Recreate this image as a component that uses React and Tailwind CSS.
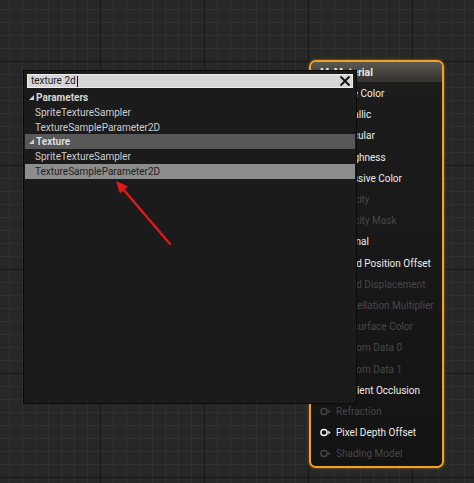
import React from "react";

const rows = [
  ["Base Color", true],
  ["Metallic", true],
  ["Specular", true],
  ["Roughness", true],
  ["Emissive Color", true],
  ["Opacity", false],
  ["Opacity Mask", false],
  ["Normal", true],
  ["World Position Offset", true],
  ["World Displacement", false],
  ["Tessellation Multiplier", false],
  ["Subsurface Color", false],
  ["Custom Data 0", false],
  ["Custom Data 1", false],
  ["Ambient Occlusion", true],
  ["Refraction", false],
  ["Pixel Depth Offset", true],
  ["Shading Model", false],
];

function Pin({ active }) {
  const c = active ? "#f2f2f2" : "#444444";
  return (
    <svg width="11" height="9" viewBox="0 0 11 9" className="shrink-0">
      <circle cx="4" cy="4.5" r="3.1" fill="none" stroke={c} strokeWidth="1.5" />
      <polygon points="8.3,2.6 10.6,4.5 8.3,6.4" fill={c} />
    </svg>
  );
}

function Tri() {
  return (
    <svg width="5" height="5" viewBox="0 0 5 5" className="shrink-0">
      <polygon points="5,0 5,5 0,5" fill="#cfcfcf" />
    </svg>
  );
}

export default function App() {
  return (
    <div className="relative w-[474px] h-[483px] overflow-hidden font-['Roboto',sans-serif] bg-[#272727] bg-[linear-gradient(to_right,#181818_1px,transparent_1px),linear-gradient(to_bottom,#181818_1px,transparent_1px),linear-gradient(to_right,#303030_1px,transparent_1px),linear-gradient(to_bottom,#303030_1px,transparent_1px)] bg-[size:104px_104px,104px_104px,13px_13px,13px_13px] bg-[position:100px_61px]">
      {/* Material node */}
      <div className="absolute left-[309px] top-[60px] w-[135px] h-[408px] rounded-[7px] border-2 border-[#f0a127] shadow-[0_0_3px_rgba(240,161,39,0.6)] bg-[#141414] overflow-hidden flex flex-col">
        <div className="h-[21px] shrink-0 bg-[linear-gradient(to_bottom,#5c5852,#34312e)] flex items-center pl-[9px] pt-[2px] text-[10.5px] font-bold text-[#e6e6e6] border-b border-[#1a1a1a]">
          M_Material
        </div>
        <div className="flex flex-col bg-[linear-gradient(to_bottom,#1c1c1c,#131313)] flex-1">
          {rows.map(([label, active]) => (
            <div key={label} className="h-[21.2px] flex items-center pl-[9px] gap-[5px]">
              <Pin active={active} />
              <span className={`text-[10px] whitespace-nowrap ${active ? "text-[#ececec]" : "text-[#474747]"}`}>
                {label}
              </span>
            </div>
          ))}
        </div>
      </div>

      {/* Search popup */}
      <div className="absolute left-[23px] top-[70px] w-[334px] h-[334px] bg-[#1b1b1b] border border-[#0a0a0a] p-[1px] flex flex-col">
        <div className="mx-[2px] mt-[2px] mb-[2px] h-[14px] bg-[#d6d6d6] border border-[#ececec] flex items-center justify-between pl-[3px] pr-[1px]">
          <div className="flex items-center text-[10px] text-[#1c1c1c] leading-none">
            <span>texture 2d</span>
            <span className="inline-block w-[1px] h-[11px] bg-[#111] ml-[1px]" />
          </div>
          <svg width="12" height="12" viewBox="0 0 12 12">
            <path d="M1.5 1.5 L10.5 10.5 M10.5 1.5 L1.5 10.5" stroke="#0d0d0d" strokeWidth="1.8" />
          </svg>
        </div>
        <div className="flex flex-col">
          <div className="h-[14.8px] flex items-center pl-[4px] gap-[2px] text-[10px] font-bold text-[#d6d6d6]">
            <Tri />
            <span>Parameters</span>
          </div>
          <div className="h-[14.8px] flex items-center pl-[10px] text-[10px] text-[#cdcdcd]">SpriteTextureSampler</div>
          <div className="h-[14.8px] flex items-center pl-[10px] text-[10px] text-[#cdcdcd]">TextureSampleParameter2D</div>
          <div className="h-[14.8px] flex items-center pl-[4px] gap-[2px] text-[10px] font-bold text-[#dcdcdc] bg-[#585858]">
            <Tri />
            <span>Texture</span>
          </div>
          <div className="h-[14.8px] flex items-center pl-[10px] text-[10px] text-[#cdcdcd]">SpriteTextureSampler</div>
          <div className="h-[14.8px] flex items-center pl-[10px] text-[10px] text-[#1e1e1e] bg-[#8d8d8d]">TextureSampleParameter2D</div>
        </div>
      </div>

      {/* Annotation arrow */}
      <svg className="absolute left-0 top-0 pointer-events-none" width="474" height="483" viewBox="0 0 474 483">
        <line x1="170" y1="244" x2="123" y2="189" stroke="#e01a1a" strokeWidth="2.4" strokeLinecap="round" />
        <polygon points="116,181 128,186.5 120,193.5" fill="#e01a1a" />
      </svg>
    </div>
  );
}
